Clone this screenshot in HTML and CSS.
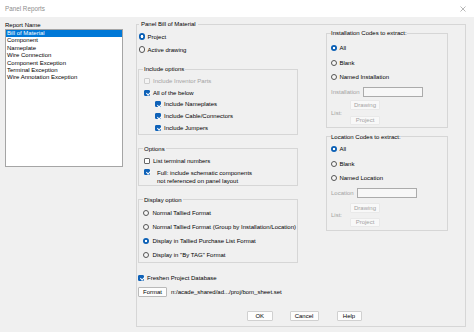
FILE: index.html
```html
<!DOCTYPE html>
<html lang="en">
<head>
    <meta charset="UTF-8">
    <title>Panel Reports</title>
    <link rel="stylesheet" href="styles.css">
</head>
<body>
    <div class="titlebar">
        <span>Panel Reports</span>
        <svg class="close" width="6" height="6" viewBox="0 0 6 6"><path d="M0.5 0.5L5.5 5.5M5.5 0.5L0.5 5.5" stroke="#9a9a9a" stroke-width="0.7"/></svg>
    </div>
    <div class="client">
        <div class="reports">
            <div class="caption">Report Name</div>
            <ul class="listbox">
                <li class="selected">Bill of Material</li>
                <li>Component</li>
                <li>Nameplate</li>
                <li>Wire Connection</li>
                <li>Component Exception</li>
                <li>Terminal Exception</li>
                <li>Wire Annotation Exception</li>
            </ul>
        </div>

        <fieldset class="panel">
            <legend>Panel Bill of Material</legend>
            <div class="columns">
                <div class="col-left">
                    <div class="opt tall"><span class="radio on"></span>Project</div>
                    <div class="opt tall"><span class="radio"></span>Active drawing</div>

                    <fieldset class="group include">
                        <legend>Include options</legend>
                        <div class="opt row12 dim"><span class="check disabled"></span>Include Inventor Parts</div>
                        <div class="opt row12"><span class="check on"></span>All of the below</div>
                        <div class="opt row12 indent"><span class="check on"></span>Include Nameplates</div>
                        <div class="opt row12 indent"><span class="check on"></span>Include Cable/Connectors</div>
                        <div class="opt row12 indent"><span class="check on"></span>Include Jumpers</div>
                    </fieldset>

                    <fieldset class="group options">
                        <legend>Options</legend>
                        <div class="opt row12"><span class="check"></span>List terminal numbers</div>
                        <div class="opt multi"><span class="check on"></span><span>Full: include schematic components<br>not referenced on panel layout</span></div>
                    </fieldset>

                    <fieldset class="group display">
                        <legend>Display option</legend>
                        <div class="opt row14"><span class="radio"></span>Normal Tallied Format</div>
                        <div class="opt row14"><span class="radio"></span>Normal Tallied Format (Group by Installation/Location)</div>
                        <div class="opt row14"><span class="radio on"></span>Display in Tallied Purchase List Format</div>
                        <div class="opt row14"><span class="radio"></span>Display in "By TAG" Format</div>
                    </fieldset>
                </div>

                <div class="col-right">
                    <fieldset class="group codes install">
                        <legend>Installation Codes to extract:</legend>
                        <div class="opt row145"><span class="radio on"></span>All</div>
                        <div class="opt row145"><span class="radio"></span>Blank</div>
                        <div class="opt row145"><span class="radio"></span>Named Installation</div>
                        <div class="field"><span class="dim">Installation</span><span class="input"></span></div>
                        <div class="list">
                            <span class="dim list-label">List:</span>
                            <div class="list-buttons">
                                <span class="btn disabled">Drawing</span>
                                <span class="btn disabled">Project</span>
                            </div>
                        </div>
                    </fieldset>

                    <fieldset class="group codes location">
                        <legend>Location Codes to extract:</legend>
                        <div class="opt row145"><span class="radio on"></span>All</div>
                        <div class="opt row145"><span class="radio"></span>Blank</div>
                        <div class="opt row145"><span class="radio"></span>Named Location</div>
                        <div class="field"><span class="dim">Location</span><span class="input"></span></div>
                        <div class="list">
                            <span class="dim list-label">List:</span>
                            <div class="list-buttons">
                                <span class="btn disabled">Drawing</span>
                                <span class="btn disabled">Project</span>
                            </div>
                        </div>
                    </fieldset>
                </div>
            </div>

            <div class="opt freshen"><span class="check on"></span>Freshen Project Database</div>
            <div class="format-row">
                <span class="btn format">Format</span>
                <span class="path">n:/acade_shared/ad.../proj/bom_sheet.set</span>
            </div>
            <div class="actions">
                <span class="btn ok">OK</span>
                <span class="btn cancel">Cancel</span>
                <span class="btn help">Help</span>
            </div>
        </fieldset>
    </div>
</body>
</html>
```

FILE: styles.css
```css
* {
    box-sizing: border-box;
}
body {
    margin: 0;
    width: 474px;
    height: 332px;
    overflow: hidden;
    background: #f0f0f0;
    font-family: "Liberation Sans", Arial, sans-serif;
    font-size: 6px;
    color: #000;
}
.titlebar {
    height: 17px;
    background: #fff;
    display: flex;
    align-items: center;
    justify-content: space-between;
    padding: 0 8px 0 5px;
    color: #8e8e8e;
    font-size: 6.3px;
}
.client {
    display: flex;
    padding-left: 5px;
}

/* report list */
.reports {
    width: 118px;
    padding-top: 4px;
}
.caption {
    line-height: 8px;
}
.listbox {
    list-style: none;
    margin: 0;
    padding: 0;
    height: 138px;
    border: 1px solid #a5a5a5;
    background: #fff;
}
.listbox li {
    line-height: 7.4px;
    padding-left: 1px;
    white-space: nowrap;
}
.listbox li.selected {
    background: #0078d7;
    color: #fff;
}

/* group boxes */
fieldset {
    margin: 0;
    min-width: 0;
    border: 1px solid #d6d6d6;
}
legend {
    line-height: 8px;
    white-space: nowrap;
}
.panel {
    margin: 3px 0 0 13px;
    width: 330px;
    padding: 2px 0 5px 1px;
}
.panel > legend {
    padding: 0 2px;
    margin-left: 1px;
}
.group {
    padding: 0 0 0 5px;
}
.group > legend {
    padding: 0 1px;
    margin-left: -1px;
}
.columns {
    display: flex;
}
.col-left {
    width: 160px;
}
.col-right {
    width: 122px;
    margin-left: 28px;
    margin-top: -1px;
}
.include {
    margin-top: 9px;
    padding-top: 2px;
}
.options {
    margin-top: 10px;
    padding-top: 2px;
}
.display {
    margin-top: 10px;
    padding-top: 2px;
}
.codes {
    padding-left: 4px;
}
.codes > legend {
    margin-left: 0;
    padding: 0;
}
.install {
    padding-top: 4px;
    padding-bottom: 2px;
}
.location {
    margin-top: 4.5px;
    padding-top: 1.5px;
    padding-bottom: 3px;
}

/* option rows */
.opt {
    display: flex;
    align-items: center;
    gap: 2px;
    white-space: nowrap;
}
.tall {
    height: 13px;
    padding-left: 1px;
}
.row12 {
    height: 11.8px;
    gap: 3px;
}
.row14 {
    height: 14px;
    gap: 3px;
    margin-left: -1px;
}
.row145 {
    height: 14.5px;
}
.indent {
    padding-left: 11px;
}
.multi {
    align-items: flex-start;
    gap: 7px;
    margin-top: 2px;
    line-height: 8px;
}
.dim {
    color: #a3a3a3;
}

.radio {
    flex: none;
    width: 6.4px;
    height: 6.4px;
    border-radius: 50%;
    border: 0.8px solid #555;
    background: #f7f7f7;
}
.radio.on {
    border: none;
    background: radial-gradient(circle, #fff 0 1.2px, #0a5fb5 1.6px);
}
.check {
    flex: none;
    position: relative;
    width: 6px;
    height: 6px;
    border: 0.8px solid #666;
    border-radius: 1px;
    background: #fff;
}
.check.on {
    background: #0f62b8;
    border-color: #0f62b8;
}
.check.on::after {
    content: "";
    position: absolute;
    left: 1.6px;
    top: 0.4px;
    width: 1.5px;
    height: 3px;
    border: solid #fff;
    border-width: 0 0.9px 0.9px 0;
    transform: rotate(45deg);
}
.check.disabled {
    border-color: #cdcdcd;
    background: #f4f4f4;
}

/* installation / location fields */
.field {
    display: flex;
    align-items: center;
    gap: 3.5px;
    height: 14px;
}
.input {
    width: 60px;
    height: 10px;
    border: 1px solid #ababab;
    background: #f7f7f7;
}
.list {
    display: flex;
    align-items: center;
    margin-top: 1.5px;
}
.list-label {
    width: 19px;
}
.list-buttons {
    display: flex;
    flex-direction: column;
    gap: 6px;
}
.location .list {
    margin-top: 3.5px;
}
.location .list-buttons {
    gap: 5px;
}

/* buttons */
.btn {
    display: flex;
    align-items: center;
    justify-content: center;
    height: 10px;
    border: 1px solid #d0d0d0;
    border-radius: 1px;
    background: #fdfdfd;
}
.btn.disabled {
    width: 30px;
    height: 9.5px;
    border-color: #e9e9e9;
    background: #f8f8f8;
    color: #a3a3a3;
}
.freshen {
    margin-top: 10px;
    height: 10px;
    gap: 3px;
}
.format-row {
    display: flex;
    align-items: center;
    margin-top: 4px;
    height: 11px;
}
.format {
    width: 29px;
    border-color: #b9b9b9;
}
.path {
    margin-left: 4px;
}
.actions {
    display: flex;
    margin-top: 13px;
    padding-left: 109px;
}
.ok {
    width: 25.5px;
}
.cancel {
    width: 29px;
    margin-left: 17px;
}
.help {
    width: 25px;
    margin-left: 18px;
}
```
